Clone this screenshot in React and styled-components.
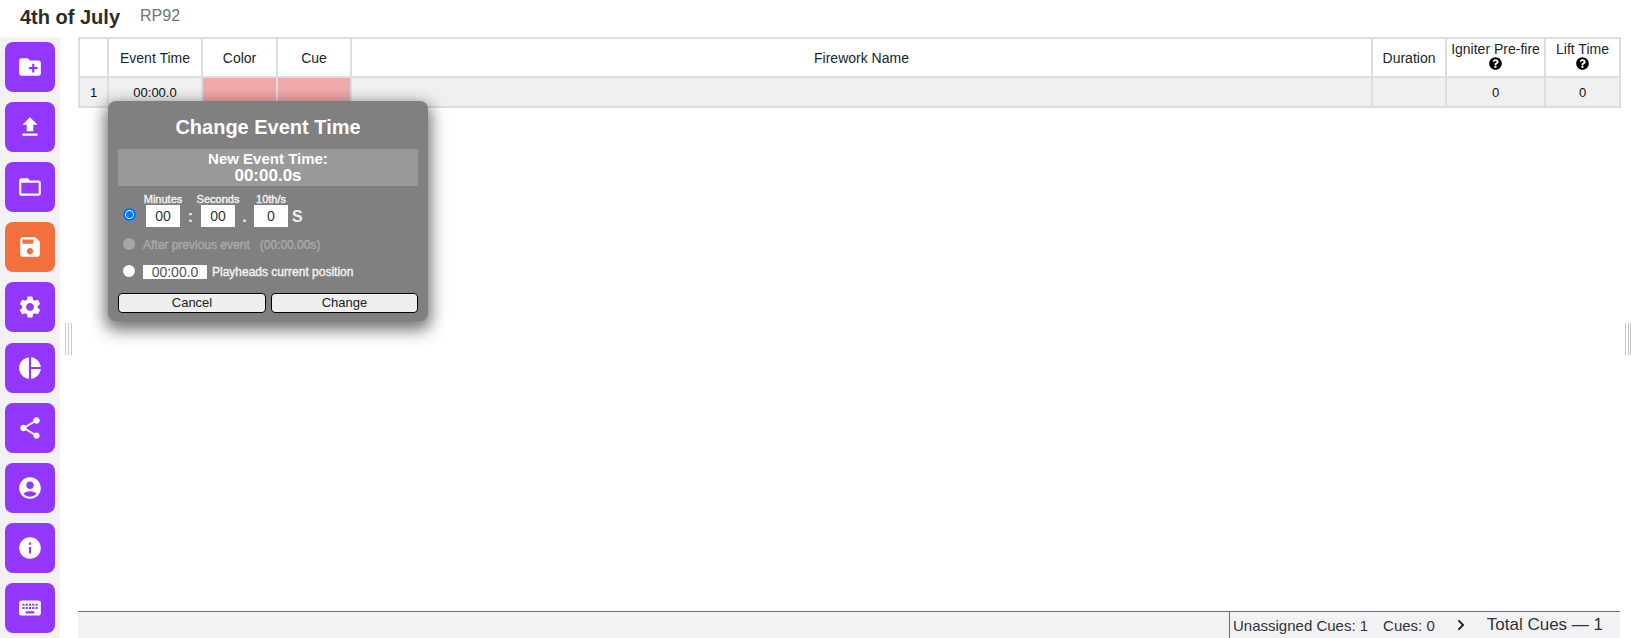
import React from "react";
import styled, { createGlobalStyle } from "styled-components";
import {
  MdCreateNewFolder, MdFileUpload, MdFolderOpen, MdSave, MdSettings,
  MdPieChart, MdShare, MdAccountCircle, MdInfo, MdKeyboard,
} from "react-icons/md";
import { FaQuestionCircle, FaChevronRight } from "react-icons/fa";

const Global = createGlobalStyle`
  html, body { margin: 0; padding: 0; height: 100%; background: #fff; overflow: hidden; }
  body { font-family: "Liberation Sans", Arial, sans-serif; color: #212529; }
  * { box-sizing: border-box; }
`;

const Page = styled.div`
  display: flex; flex-direction: column; width: 1631px; height: 638px;
`;
const Header = styled.header`
  height: 37px; flex: none; display: flex; align-items: flex-start; padding: 6px 0 0 20px;
`;
const Title = styled.h1`
  margin: 0; font-size: 20px; line-height: 23px; font-weight: 700; color: #2b2b2b;
`;
const Code = styled.span`
  margin-left: 20px; font-size: 16px; line-height: 20px; color: #6c757d;
`;
const Body = styled.div`
  flex: 1; display: flex; min-height: 0;
`;
const Sidebar = styled.nav`
  width: 60px; flex: none; background: #f2f2f5; padding: 5px; display: flex;
  flex-direction: column; justify-content: space-between;
`;
const SideButton = styled.button`
  width: 50px; height: 50px; border: 0; padding: 0; border-radius: 8px;
  background: ${(p) => (p.$accent ? "#f2703e" : "#9336fe")};
  color: #fff; display: flex; align-items: center; justify-content: center;
  svg { width: 26px; height: 26px; }
`;
const Gutter = styled.div`
  flex: none; width: ${(p) => p.$w}px; display: flex; align-items: center; padding-left: ${(p) => p.$pad}px;
  padding-top: 3px;
`;
const Grip = styled.div`
  width: 7px; height: 32px;
  border-left: 1px solid #c8c8c8; border-right: 1px solid #c8c8c8;
  background: linear-gradient(to right, transparent 2px, #c8c8c8 2px, #c8c8c8 3px, transparent 3px);
`;
const Main = styled.main`
  flex: 1; min-width: 0; display: flex; flex-direction: column; position: relative;
`;
const TableArea = styled.div`
  flex: 1; min-height: 0;
`;
const Table = styled.table`
  border-collapse: collapse; table-layout: fixed; width: 1541px; font-size: 14px;
  border: 2px solid #ddd;
`;
const HeadCell = styled.th`
  height: 39px; padding: 0 0 ${(p) => (p.$stack ? 4 : 0)}px; font-weight: 400; font-size: 14px; line-height: 16px; color: #212529;
  border: 2px solid #ddd; text-align: center; background: #fff; vertical-align: middle;
`;
const BodyCell = styled.td`
  height: 30px; padding: 0; font-size: 13px; text-align: center; color: #111;
  border: 2px solid #ddd; vertical-align: middle;
  background: ${(p) => (p.$tint ? "#f0aaaa" : "#f0f0f0")};
`;
const HelpIcon = styled(FaQuestionCircle)`
  display: block; margin: 0 auto; width: 13px; height: 13px; color: #000;
`;
const Footer = styled.footer`
  height: 27px; flex: none; background: #f2f2f5; border-top: 1px solid #6f6f6f;
  display: flex; justify-content: flex-end;
`;
const Stats = styled.div`
  width: 391px; border-left: 1px solid #6f6f6f; display: flex; align-items: center;
  padding-left: 3px; font-size: 15px; color: #333; white-space: nowrap;
`;
const Stat = styled.span`
  margin-right: ${(p) => p.$gap}px;
`;
const Chevron = styled(FaChevronRight)`
  width: 12px; height: 12px; color: #222; margin-right: 20px;
`;
const Total = styled.span`
  font-size: 17px; color: #333;
`;
const Modal = styled.div`
  position: absolute; left: 30px; top: 64px; width: 320px; height: 220px; background: #808080;
  border-radius: 8px; box-shadow: 0 6px 16px 3px rgba(0,0,0,.55); padding: 0 10px; color: #fff;
`;
const ModalTitle = styled.h2`
  margin: 0; padding-top: 15px; height: 48px; text-align: center; font-size: 20px; line-height: 23px;
  font-weight: 700; color: #fff;
`;
const Preview = styled.div`
  height: 37px; background: #999; border-radius: 2px; text-align: center; font-weight: 700;
`;
const PreviewLabel = styled.div`
  font-size: 15px; line-height: 17px; padding-top: 1px;
`;
const PreviewValue = styled.div`
  font-size: 17px; line-height: 18px;
`;
const Radio = styled.span`
  display: block; flex: none; width: 12px; height: 12px; border-radius: 50%; margin-top: ${(p) => p.$mt || 0}px;
  background: ${(p) => (p.$off ? "#a6a6a6" : "#fff")};
  ${(p) => p.$on && "width: 13px; height: 13px; border: 2px solid #0075ff; box-shadow: inset 0 0 0 1px #fff; background: #0075ff;"}
`;
const TimeRow = styled.div`
  display: flex; align-items: flex-start; margin-top: 7px; padding-left: 5px; height: 34px;
`;
const RadioSlot = styled.div`
  padding-top: 15px; width: 23px; flex: none;
`;
const Field = styled.div`
  width: 34px; flex: none; display: flex; flex-direction: column; align-items: center;
`;
const FieldLabel = styled.span`
  font-size: 11px; line-height: 12px; font-weight: 400; white-space: nowrap; color: #f2f2f2; -webkit-text-stroke: 0.4px #f2f2f2;
`;
const FieldValue = styled.span`
  width: 34px; height: 22px; background: #fff; color: #333; font-size: 14px; line-height: 22px; text-align: center;
`;
const Sep = styled.span`
  width: ${(p) => p.$w}px; flex: none; text-align: center; font-weight: 700; font-size: 16px; padding-top: 15px; line-height: 18px; color: #eee;
`;
const Unit = styled.span`
  margin-left: 4px; padding-top: 15px; font-weight: 700; font-size: 16px; line-height: 18px; color: #eee;
`;
const OptionRow = styled.div`
  display: flex; align-items: center; padding-left: 5px; height: ${(p) => p.$h}px; margin-top: ${(p) => p.$mt}px;
`;
const DimText = styled.span`
  margin-left: 8px; font-size: 12px; font-weight: 400; color: #a9a9a9; -webkit-text-stroke: 0.4px #a9a9a9; white-space: pre;
`;
const Playhead = styled.span`
  margin-left: 8px; width: 64px; height: 14px; background: #fff; color: #555; font-size: 14px; line-height: 14px; text-align: center;
`;
const OptionText = styled.span`
  margin-left: 5px; font-size: 12px; font-weight: 400; color: #f2f2f2; -webkit-text-stroke: 0.4px #f2f2f2; white-space: nowrap;
`;
const Actions = styled.div`
  display: flex; justify-content: space-between; margin-top: 12px;
`;
const ActionButton = styled.button`
  width: ${(p) => p.$w}px; height: 20px; padding: 0; background: #efefef; color: #222; font: 400 13px/18px "Liberation Sans", Arial, sans-serif;
  border: 1px solid #000; border-radius: 4px;
`;

const tools = [
  [MdCreateNewFolder], [MdFileUpload], [MdFolderOpen], [MdSave, true], [MdSettings],
  [MdPieChart], [MdShare], [MdAccountCircle], [MdInfo], [MdKeyboard],
];
const widths = [29, 94, 75, 74, 1021, 74, 99, 75];

export default function App() {
  return (
    <Page>
      <Global />
      <Header>
        <Title>4th of July</Title>
        <Code>RP92</Code>
      </Header>
      <Body>
        <Sidebar>
          {tools.map(([Icon, accent], i) => (
            <SideButton key={i} $accent={accent}><Icon /></SideButton>
          ))}
        </Sidebar>
        <Gutter $w={18} $pad={5}><Grip /></Gutter>
        <Main>
          <TableArea>
            <Table>
              <colgroup>
                {widths.map((w, i) => <col key={i} style={{ width: w }} />)}
              </colgroup>
              <thead>
                <tr>
                  <HeadCell />
                  <HeadCell>Event Time</HeadCell>
                  <HeadCell>Color</HeadCell>
                  <HeadCell>Cue</HeadCell>
                  <HeadCell>Firework Name</HeadCell>
                  <HeadCell>Duration</HeadCell>
                  <HeadCell $stack>Igniter Pre-fire<HelpIcon /></HeadCell>
                  <HeadCell $stack>Lift Time<HelpIcon /></HeadCell>
                </tr>
              </thead>
              <tbody>
                <tr>
                  <BodyCell>1</BodyCell>
                  <BodyCell>00:00.0</BodyCell>
                  <BodyCell $tint />
                  <BodyCell $tint />
                  <BodyCell />
                  <BodyCell />
                  <BodyCell>0</BodyCell>
                  <BodyCell>0</BodyCell>
                </tr>
              </tbody>
            </Table>
          </TableArea>
          <Footer>
            <Stats>
              <Stat $gap={15}>Unassigned Cues: 1</Stat>
              <Stat $gap={20}>Cues: 0</Stat>
              <Chevron />
              <Total>Total Cues — 1</Total>
            </Stats>
          </Footer>
          <Modal>
            <ModalTitle>Change Event Time</ModalTitle>
            <Preview>
              <PreviewLabel>New Event Time:</PreviewLabel>
              <PreviewValue>00:00.0s</PreviewValue>
            </Preview>
            <TimeRow>
              <RadioSlot><Radio $on /></RadioSlot>
              <Field><FieldLabel>Minutes</FieldLabel><FieldValue>00</FieldValue></Field>
              <Sep $w={21}>:</Sep>
              <Field><FieldLabel>Seconds</FieldLabel><FieldValue>00</FieldValue></Field>
              <Sep $w={19}>.</Sep>
              <Field><FieldLabel>10th/s</FieldLabel><FieldValue>0</FieldValue></Field>
              <Unit>S</Unit>
            </TimeRow>
            <OptionRow $h={20} $mt={8}>
              <Radio $off $mt={-3} />
              <DimText>After previous event   (00:00.00s)</DimText>
            </OptionRow>
            <OptionRow $h={18} $mt={8}>
              <Radio $mt={-3} />
              <Playhead>00:00.0</Playhead>
              <OptionText>Playheads current position</OptionText>
            </OptionRow>
            <Actions>
              <ActionButton $w={148}>Cancel</ActionButton>
              <ActionButton $w={147}>Change</ActionButton>
            </Actions>
          </Modal>
        </Main>
        <Gutter $w={11} $pad={5}><Grip /></Gutter>
      </Body>
    </Page>
  );
}
